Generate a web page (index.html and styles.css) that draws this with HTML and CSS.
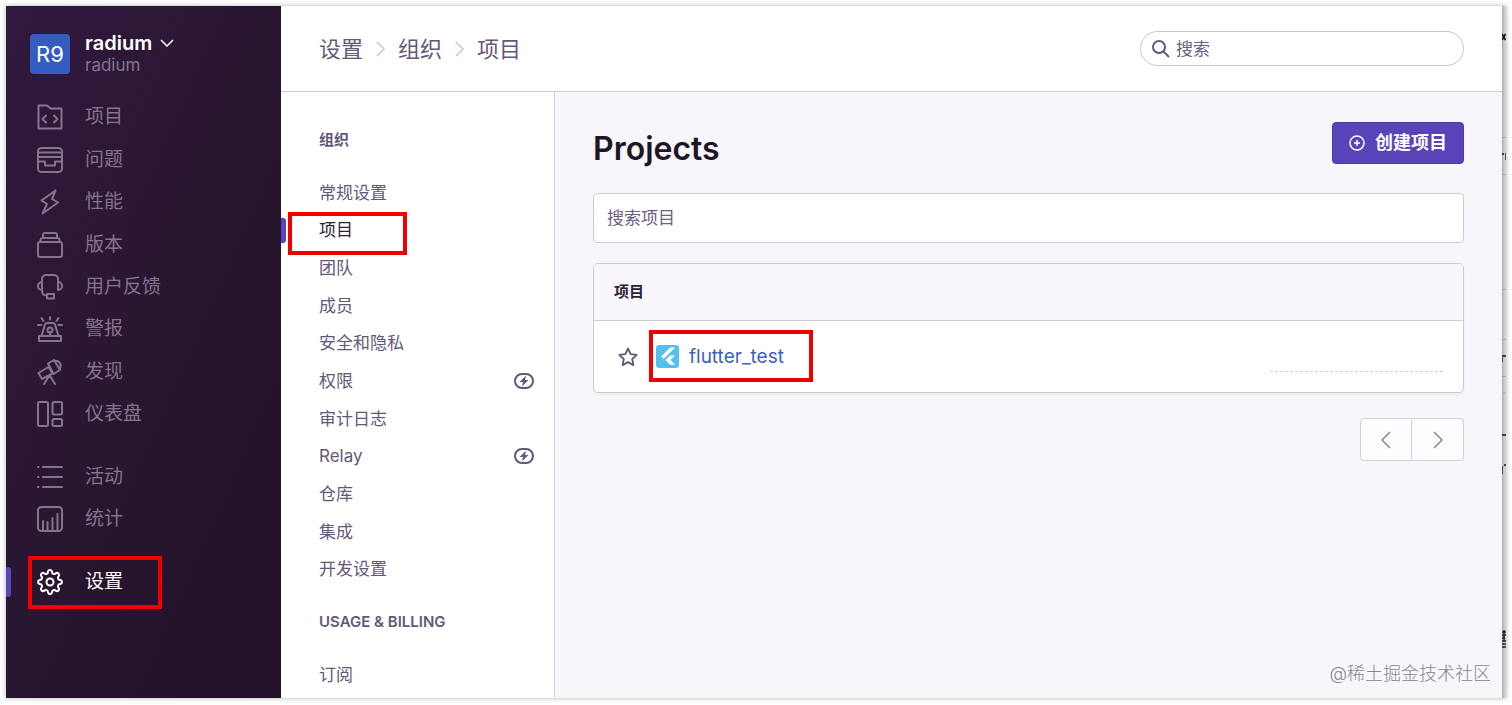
FILE: index.html
```html
<!DOCTYPE html>
<html lang="zh-CN">
<head>
    <meta charset="UTF-8">
    <meta name="viewport" content="width=device-width, initial-scale=1.0">
    <title>Projects - radium</title>
    <link rel="stylesheet" href="styles.css">
</head>
<body>
    <div class="window">
        <aside class="sidebar">
            <button class="org" type="button">
                <span class="avatar">R9</span>
                <span class="org-text">
                    <span class="org-name">radium
                        <svg class="caret" viewBox="0 0 14 8"><path d="M1 1l6 6 6-6"/></svg>
                    </span>
                    <span class="org-user">radium</span>
                </span>
            </button>

            <nav class="menu menu-main">
                <a href="#" class="menu-item">
                    <svg class="icon" viewBox="0 0 26 26"><path d="M1.500 1.500h8.500l3.500 3h11v20h-23z"/><path d="M9 11.500l-3.500 3.500 3.500 3.500M17 11.500l3.500 3.500-3.500 3.500"/></svg>
                    项目
                </a>
                <a href="#" class="menu-item">
                    <svg class="icon" viewBox="0 0 26 26"><rect x="1" y="1" width="24" height="24" rx="3.500"/><path d="M2 5.500h22M2 10h22M2 14.500h6v4h10v-4h6"/></svg>
                    问题
                </a>
                <a href="#" class="menu-item">
                    <svg class="icon" viewBox="0 0 26 26"><path d="M18.500 1.500L4.500 11.500l5.500 3.500-4.500 9.500 15.500-11-6-3.500z"/></svg>
                    性能
                </a>
                <a href="#" class="menu-item">
                    <svg class="icon" viewBox="0 0 26 26"><rect x="1" y="10" width="24" height="15" rx="2"/><path d="M3.500 10V8a2 2 0 0 1 2-2h15a2 2 0 0 1 2 2v2M6 6V3a2 2 0 0 1 2-2h10a2 2 0 0 1 2 2v3"/></svg>
                    版本
                </a>
                <a href="#" class="menu-item">
                    <svg class="icon" viewBox="0 0 26 26"><path d="M5 16V5a4 4 0 0 1 4-4h8a4 4 0 0 1 4 4v11M5 8a4 4 0 0 0 0 8M21 8a4 4 0 0 1 0 8M5 16c0 4 1.500 5.500 4.500 5.500"/><rect x="10" y="20" width="7" height="4.500"/></svg>
                    用户反馈
                </a>
                <a href="#" class="menu-item">
                    <svg class="icon" viewBox="0 0 26 26"><rect x="2" y="20" width="22" height="5"/><path d="M4.500 20L8 8.500c.3-1 1-1.500 2-1.500h6c1 0 1.700.5 2 1.500L21.500 20M13 16v4M13 1v2.500M4.500 2l2 3M21.500 2l-2 3M1 9h3.500M21.500 9H25"/><circle cx="13" cy="14" r="2.500"/></svg>
                    警报
                </a>
                <a href="#" class="menu-item">
                    <svg class="icon" viewBox="0 0 26 26"><path d="M1.500 14l10-6 4 6.500-10.500 5.500zM11 4.500l6-3.500 6 10-6.500 4zM17 2c5-1 8 3 6 7.500M12 17L7 25M13 17l5 8"/></svg>
                    发现
                </a>
                <a href="#" class="menu-item">
                    <svg class="icon" viewBox="0 0 26 26"><rect x="1" y="1" width="10" height="24" rx="1.500"/><rect x="15.500" y="1" width="9.500" height="12.500" rx="1.500"/><rect x="15.500" y="18" width="9.500" height="7" rx="1.500"/></svg>
                    仪表盘
                </a>
            </nav>
            <nav class="menu menu-info">
                <a href="#" class="menu-item">
                    <svg class="icon" viewBox="0 0 26 26"><path d="M6 3h19M6 13h19M6 23h19M1 3h.5M1 13h.5M1 23h.5"/></svg>
                    活动
                </a>
                <a href="#" class="menu-item">
                    <svg class="icon" viewBox="0 0 26 26"><rect x="1" y="1" width="24" height="24" rx="3.500"/><path d="M6 24v-9M10.500 24v-8M15.500 24V12M20.500 24V8"/></svg>
                    统计
                </a>
            </nav>
            <nav class="menu">
                <a href="#" class="menu-item active">
                    <svg class="icon" viewBox="0 0 26 26"><path d="M10.980 2.590A2.100 2.100 0 0 1 15.020 2.590A2.200 2.200 0 0 0 18.930 4.210A2.100 2.100 0 0 1 21.790 7.070A2.200 2.200 0 0 0 23.410 10.980A2.100 2.100 0 0 1 23.410 15.020A2.200 2.200 0 0 0 21.790 18.930A2.100 2.100 0 0 1 18.930 21.790A2.200 2.200 0 0 0 15.020 23.410A2.100 2.100 0 0 1 10.980 23.410A2.200 2.200 0 0 0 7.070 21.790A2.100 2.100 0 0 1 4.210 18.930A2.200 2.200 0 0 0 2.590 15.020A2.100 2.100 0 0 1 2.590 10.980A2.200 2.200 0 0 0 4.210 7.070A2.100 2.100 0 0 1 7.070 4.210A2.200 2.200 0 0 0 10.980 2.590z"/><circle cx="13" cy="13" r="3.500"/></svg>
                    设置
                </a>
            </nav>
        </aside>

        <div class="content">
            <header class="topbar">
                <div class="crumbs">
                    <a href="#">设置</a>
                    <svg viewBox="0 0 9 16"><path d="M1 1l7 7-7 7"/></svg>
                    <a href="#">组织</a>
                    <svg viewBox="0 0 9 16"><path d="M1 1l7 7-7 7"/></svg>
                    <a href="#">项目</a>
                </div>
                <label class="search">
                    <svg viewBox="0 0 18 18"><circle cx="7" cy="7" r="6"/><path d="M11.500 11.500l5.500 5.500"/></svg>
                    <input type="text" placeholder="搜索" aria-label="搜索">
                </label>
            </header>

            <div class="columns">
                <nav class="settings-nav">
                    <h2>组织</h2>
                    <ul class="nav-list grow">
                        <li><a href="#">常规设置</a></li>
                        <li><a href="#" class="current">项目</a></li>
                        <li><a href="#">团队</a></li>
                        <li><a href="#">成员</a></li>
                        <li><a href="#">安全和隐私</a></li>
                        <li><a href="#">权限</a><svg class="bolt" viewBox="0 0 20 16"><rect x="1" y="1" width="18" height="14" rx="7"/><path d="M12 2.500L5.500 9H9l-1 4.500L14.500 7H11z"/></svg></li>
                        <li><a href="#">审计日志</a></li>
                        <li><a href="#">Relay</a><svg class="bolt" viewBox="0 0 20 16"><rect x="1" y="1" width="18" height="14" rx="7"/><path d="M12 2.500L5.500 9H9l-1 4.500L14.500 7H11z"/></svg></li>
                        <li><a href="#">仓库</a></li>
                        <li><a href="#">集成</a></li>
                        <li><a href="#">开发设置</a></li>
                    </ul>
                    <h2>USAGE &amp; BILLING</h2>
                    <ul class="nav-list">
                        <li><a href="#">订阅</a></li>
                    </ul>
                </nav>

                <main class="main">
                    <div class="page-head">
                        <h1>Projects</h1>
                        <button class="create-btn" type="button">
                            <svg viewBox="0 0 16 16"><circle cx="8" cy="8" r="7"/><path d="M8 5v6M5 8h6"/></svg>
                            创建项目
                        </button>
                    </div>

                    <input class="filter" type="text" placeholder="搜索项目" aria-label="搜索项目">

                    <section class="panel">
                        <h3 class="panel-head">项目</h3>
                        <div class="project">
                            <button class="star" type="button" aria-label="收藏">
                                <svg viewBox="0 0 20 20"><path d="M10 1.500l2.600 5.600 6.100.7-4.500 4.200 1.200 6.100L10 15.100l-5.400 3 1.200-6.100L1.300 7.800l6.100-.7z"/></svg>
                            </button>
                            <a href="#" class="project-link">
                                <svg class="platform" viewBox="0 0 22 22"><rect width="22" height="22" rx="3" fill="#54c0f0"/><path d="M13.500 2.500h4.800L7.300 13.300 5 11zM13.500 10h4.800l-4.400 4.400 4.400 4.600h-4.800l-4.600-4.600z" fill="#fff"/></svg>
                                flutter_test
                            </a>
                            <span class="chart"></span>
                        </div>
                    </section>

                    <div class="pager">
                        <button type="button" aria-label="上一页"><svg viewBox="0 0 10 18"><path d="M9 1L1 9l8 8"/></svg></button>
                        <button type="button" aria-label="下一页"><svg viewBox="0 0 10 18"><path d="M1 1l8 8-8 8"/></svg></button>
                    </div>
                </main>
            </div>
        </div>

        <!-- sliver of the page behind the window -->
        <div class="behind">
            <svg viewBox="0 0 4 692">
                <path d="M0 131.500h4M0 168.500h4M0 283.500h4M0 333.500h4M0 370.500h4M0 387h4" stroke="#a5a3a8"/>
                <path d="M0 28l3.500 6M3.500 28L0 34M0 148h2M0 350h4M0 429h4M2 459h2" stroke="#111" stroke-width="1.500"/>
                <path d="M3.500 147v7M.5 350v6M.5 460v8" stroke="#555"/>
                <path d="M0 626h4M0 629h4M0 632h3M0 635h4M0 638h4M0 641h4M2 624v11" stroke="#222" stroke-width="1.500"/>
            </svg>
        </div>
        <div class="watermark">@稀土掘金技术社区</div>
    </div>
</body>
</html>
```
FILE: styles.css
```css
*,
*::before,
*::after {
    box-sizing: border-box;
}

body {
    margin: 0;
    padding: 6px;
    height: 100vh;
    background-color: #fff;
    font-family: Inter, "Noto Sans CJK SC", sans-serif;
    font-size: 17px;
    line-height: 24px;
    color: #645879;
}

a {
    color: inherit;
    text-decoration: none;
}

button,
input {
    font: inherit;
    color: inherit;
}

button {
    cursor: pointer;
}

h1, h2, h3, ul {
    margin: 0;
    padding: 0;
}

svg {
    display: block;
    flex-shrink: 0;
    fill: none;
    stroke: currentColor;
    stroke-width: 2;
}

.window {
    position: relative;
    display: flex;
    height: calc(100vh - 13px);
    box-shadow: 0 0 5px rgba(0, 0, 0, 0.3);
}

/* Dark sidebar */
.sidebar {
    display: flex;
    flex-direction: column;
    width: 275px;
    flex-shrink: 0;
    padding: 26px 0 95px;
    background: linear-gradient(294deg, #211028 0%, #28162f 45%, #31183e 100%);
    color: #84748f;
}

.org {
    display: flex;
    gap: 15px;
    margin: 0 0 20px 24px;
    padding: 0;
    border: none;
    background: none;
    text-align: left;
}

.avatar {
    width: 40px;
    height: 40px;
    margin-top: 2px;
    border-radius: 4px;
    background-color: #345dc1;
    color: #fff;
    font-size: 22px;
    line-height: 40px;
    text-align: center;
}

.org-text {
    display: flex;
    flex-direction: column;
}

.org-name {
    display: flex;
    align-items: center;
    gap: 8px;
    color: #fff;
    font-size: 20px;
    font-weight: 600;
    line-height: 22px;
}

.org-user {
    line-height: 22px;
}

.caret {
    width: 14px;
    height: 8px;
    stroke-width: 1.5;
}

.menu {
    display: flex;
    flex: 1;
    flex-direction: column;
}

.menu-main {
    flex: 8;
    margin-bottom: 20px;
}

.menu-info {
    flex: 2;
    margin-bottom: 20px;
}

.menu-item {
    position: relative;
    display: flex;
    flex: 1;
    align-items: center;
    gap: 22px;
    min-height: 38px;
    padding-left: 31px;
    font-size: 19px;
}

.icon {
    width: 26px;
    height: 26px;
    stroke-linecap: round;
    stroke-linejoin: round;
}

.menu-item.active {
    color: #fff;
}

.menu-item.active::before,
.current::before {
    content: "";
    position: absolute;
    left: 0;
    width: 5px;
    height: 30px;
    border-radius: 0 3px 3px 0;
    background-color: #5a45b8;
}

/* Red highlight frames */
.menu-item.active::after,
.current::after,
.project-link::after {
    content: "";
    position: absolute;
    border: 4px solid #f00000;
}

.menu-item.active::after {
    left: 22px;
    top: -5px;
    width: 134px;
    height: 53px;
}

/* Right side */
.content {
    display: flex;
    flex: 1;
    flex-direction: column;
    min-width: 0;
}

.topbar {
    display: flex;
    align-items: center;
    justify-content: space-between;
    height: 86px;
    padding: 0 38px;
    border-bottom: 1px solid #cfcbd4;
    background-color: #fff;
}

.crumbs {
    display: flex;
    align-items: center;
    gap: 13px;
    font-size: 22px;
}

.crumbs svg {
    width: 9px;
    height: 16px;
    stroke: #c8c4cc;
    stroke-width: 1.5;
}

.search {
    display: flex;
    align-items: center;
    gap: 6px;
    width: 324px;
    height: 35px;
    padding: 0 11px;
    border: 1px solid #c9c5cd;
    border-radius: 18px;
}

.search svg {
    width: 18px;
    height: 18px;
}

.search input {
    flex: 1;
    min-width: 0;
    padding: 0;
    border: none;
    outline: none;
    background: none;
}

input::placeholder {
    color: #6b6080;
    opacity: 1;
}

.columns {
    display: flex;
    flex: 1;
    min-height: 0;
}

.settings-nav {
    display: flex;
    flex-direction: column;
    width: 274px;
    flex-shrink: 0;
    padding: 38px 0 5px;
    border-right: 1px solid #d6d3da;
    background-color: #fff;
}

.settings-nav h2 {
    padding-left: 38px;
    margin-bottom: 24px;
    font-size: 15px;
    font-weight: 600;
    line-height: 20px;
}

.nav-list {
    display: flex;
    flex-direction: column;
    list-style: none;
}

.nav-list.grow {
    flex: 1;
    margin-bottom: 24px;
}

.nav-list li {
    position: relative;
    display: flex;
    flex: 1;
    align-items: center;
    justify-content: space-between;
    min-height: 37px;
    padding: 0 20px 0 38px;
}

.current {
    color: #2b2233;
}

.current::before {
    top: 6px;
    height: 25px;
}

.current::after {
    left: 7px;
    top: 0;
    width: 119px;
    height: 43px;
}

.bolt {
    width: 20px;
    height: 16px;
}

.bolt path {
    fill: currentColor;
    stroke: none;
}

/* Projects page */
.main {
    flex: 1;
    min-width: 0;
    padding: 30px 38px;
    background-color: #f8f6fa;
}

.page-head {
    display: flex;
    align-items: flex-start;
    justify-content: space-between;
    margin-bottom: 24px;
}

.page-head h1 {
    padding-top: 7px;
    color: #1d1626;
    font-size: 32px;
    font-weight: 600;
    line-height: 40px;
}

.create-btn {
    display: flex;
    align-items: center;
    gap: 10px;
    height: 42px;
    padding: 0 16px;
    border: 1px solid #4c3aa8;
    border-radius: 4px;
    background-color: #5843b8;
    color: #fff;
    font-size: 18px;
    font-weight: 700;
}

.create-btn svg {
    width: 16px;
    height: 16px;
    stroke-width: 1.5;
}

.filter {
    display: block;
    width: 100%;
    height: 50px;
    margin-bottom: 20px;
    padding: 0 13px;
    border: 1px solid #cfcbd4;
    border-radius: 4px;
    background-color: #fff;
}

.panel {
    margin-bottom: 25px;
    border: 1px solid #cfcbd4;
    border-radius: 5px;
    background-color: #fff;
    box-shadow: 0 2px 2px rgba(43, 34, 51, 0.04);
}

.panel-head {
    padding: 16px 20px;
    border-bottom: 1px solid #cfcbd4;
    border-radius: 4px 4px 0 0;
    background-color: #f8f6fa;
    color: #2b2233;
    font-size: 15px;
    font-weight: 700;
}

.project {
    display: flex;
    align-items: center;
    gap: 18px;
    height: 71px;
    padding: 0 20px 0 24px;
}

.star {
    padding: 0;
    border: none;
    background: none;
}

.star svg {
    width: 20px;
    height: 20px;
    stroke-width: 1.8;
    stroke-linejoin: round;
}

.project-link {
    position: relative;
    display: flex;
    align-items: center;
    gap: 10px;
    color: #3b60c5;
    font-size: 19px;
}

.project-link::after {
    left: -7px;
    top: -15px;
    width: 164px;
    height: 52px;
}

.platform {
    width: 23px;
    height: 23px;
    stroke: none;
}

.chart {
    width: 173px;
    margin: 30px 0 0 auto;
    border-top: 1px dashed #d3d1d6;
}

.pager {
    display: flex;
    justify-content: flex-end;
}

.pager button {
    display: flex;
    align-items: center;
    justify-content: center;
    width: 52px;
    height: 43px;
    padding: 0;
    border: 1px solid #d3d0d8;
    border-radius: 4px 0 0 4px;
    background-color: #fdfcfe;
    color: #87828e;
}

.pager button + button {
    border-left: none;
    border-radius: 0 4px 4px 0;
}

.pager svg {
    width: 10px;
    height: 18px;
    stroke-width: 1.5;
}

.behind {
    width: 4px;
    flex-shrink: 0;
    overflow: hidden;
    background: linear-gradient(90deg, #aaa8ac, #cfcdd1 60%);
}

.behind svg {
    width: 4px;
    height: 692px;
    stroke-width: 1;
}

.watermark {
    position: absolute;
    right: 15px;
    bottom: 12px;
    color: #86838b;
    font-size: 18px;
    font-weight: 300;
    text-shadow: -1px -1px 0 #fff;
}
```
